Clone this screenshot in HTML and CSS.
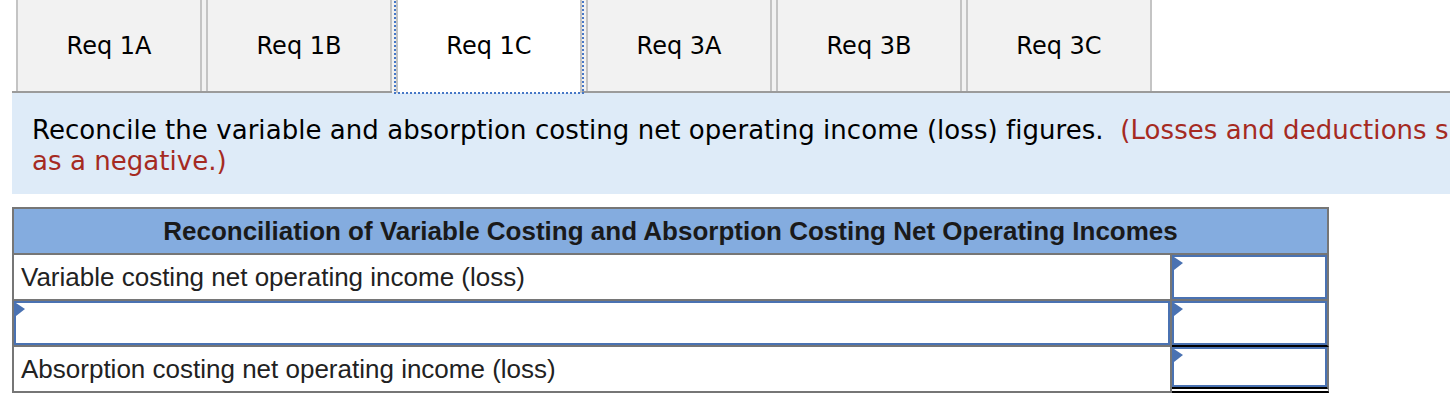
FILE: index.html
```html
<!DOCTYPE html>
<html lang="en">
<head>
<meta charset="utf-8">
<title>Reconciliation</title>
<link rel="stylesheet" href="styles.css">
</head>
<body>
<div class="page">
  <div class="tabs">
    <button class="tab">Req 1A</button>
    <button class="tab">Req 1B</button>
    <button class="tab tab-active">Req 1C</button>
    <button class="tab">Req 3A</button>
    <button class="tab">Req 3B</button>
    <button class="tab">Req 3C</button>
  </div>
  <div class="prompt">
    <p class="prompt-text">Reconcile the variable and absorption costing net operating income (loss) figures.&nbsp; <span class="note">(Losses and deductions should be indicated as a negative.)</span></p>
  </div>
  <div class="recon">
    <div class="recon-head">Reconciliation of Variable Costing and Absorption Costing Net Operating Incomes</div>
    <div class="row">
      <div class="cell-label">Variable costing net operating income (loss)</div>
      <div class="cell-amt"><span class="field"><input class="inp" type="text"></span></div>
    </div>
    <div class="row">
      <div class="cell-label cell-select"><span class="field"><input class="inp" type="text"></span></div>
      <div class="cell-amt cell-sub"><span class="field"><input class="inp" type="text"></span></div>
    </div>
    <div class="row">
      <div class="cell-label">Absorption costing net operating income (loss)</div>
      <div class="cell-amt cell-total"><span class="field"><input class="inp" type="text"></span></div>
    </div>
  </div>
</div>
</body>
</html>
```
FILE: styles.css
```css
html, body {
  margin: 0;
  padding: 0;
  overflow: hidden;
  background: #fff;
}

.page {
  padding-left: 12px;
  width: 1800px;
}

.tabs {
  display: flex;
  height: 91px;
  border-bottom: 2px solid #9b9b9b;
  padding-left: 4px;
}

.tab {
  box-sizing: border-box;
  width: 186px;
  height: 91px;
  margin: 0;
  padding: 0;
  border: 0;
  border-left: 2px solid #c4c4c4;
  border-right: 2px solid #c4c4c4;
  background: #f2f2f2;
  font-family: "DejaVu Sans", Verdana, sans-serif;
  font-size: 24px;
  color: #000;
}

.tab + .tab {
  margin-left: 4px;
  box-shadow: -4px 0 0 #f2f2f2;
}

.tab-active {
  position: relative;
  z-index: 1;
  height: 93px;
  padding-bottom: 2px;
  margin-bottom: -2px;
  background: #fff;
}

.tab-active::after {
  content: "";
  position: absolute;
  top: -2px;
  left: -4px;
  right: -4px;
  bottom: -1px;
  border: 2px dotted #4677c6;
  pointer-events: none;
}

.prompt {
  box-sizing: border-box;
  width: 1718px;
  background: #deebf8;
  padding: 22px 20px 17px 20px;
}

.prompt-text {
  margin: 0;
  font-family: "DejaVu Sans", Verdana, sans-serif;
  font-size: 26px;
  line-height: 31px;
  letter-spacing: 0.05px;
  font-variant-ligatures: none;
  color: #000;
}

.note {
  color: #a52a22;
}

.recon {
  box-sizing: border-box;
  width: 1317px;
  margin-top: 13px;
  border-left: 2px solid #767676;
  border-top: 2px solid #767676;
  font-family: "Liberation Sans", Arial, sans-serif;
  font-size: 26px;
  color: #222;
}

.recon-head {
  box-sizing: border-box;
  height: 46px;
  border-right: 2px solid #767676;
  border-bottom: 2px solid #767676;
  background: #84acdf;
  font-weight: bold;
  color: #1a1a1a;
  display: flex;
  align-items: center;
  justify-content: center;
}

.row {
  display: flex;
}

.cell-label {
  box-sizing: border-box;
  width: 1158px;
  height: 46px;
  border-right: 2px solid #767676;
  border-bottom: 2px solid #767676;
  padding-left: 7px;
  display: flex;
  align-items: center;
}

.cell-select {
  padding-left: 0;
  align-items: stretch;
}

.cell-amt {
  box-sizing: border-box;
  width: 157px;
  height: 46px;
  border-right: 2px solid #767676;
  border-bottom: 2px solid #767676;
  display: flex;
}

.cell-sub {
  border-bottom: 2px solid #000;
}

.cell-total {
  border-bottom: 6px double #000;
}

.field {
  position: relative;
  display: block;
  flex: 1;
}

.field::before {
  content: "";
  position: absolute;
  left: 2px;
  top: 2px;
  width: 0;
  height: 0;
  border-left: 9px solid #4a72b2;
  border-top: 6px solid transparent;
  border-bottom: 7px solid transparent;
}

.inp {
  box-sizing: border-box;
  display: block;
  width: 100%;
  height: 100%;
  margin: 0;
  padding: 0 6px;
  border: 2px solid #4a72b2;
  border-radius: 0;
  background: #fff;
  font-family: "Liberation Sans", Arial, sans-serif;
  font-size: 26px;
  outline: none;
}
```
